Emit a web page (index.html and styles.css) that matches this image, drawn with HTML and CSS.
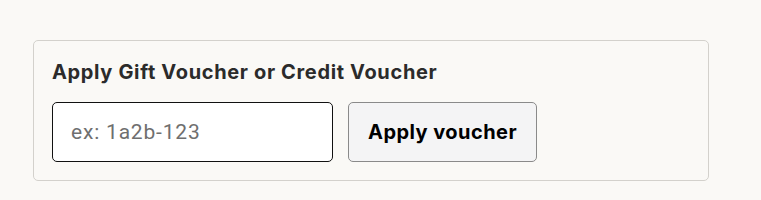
FILE: index.html
```html
<!DOCTYPE html>
<html lang="en">
<head>
    <meta charset="UTF-8">
    <title>Apply voucher</title>
    <link rel="stylesheet" href="styles.css">
</head>
<body>
    <div class="voucher-box">
        <h3 class="voucher-title">Apply Gift Voucher or Credit Voucher</h3>
        <form class="voucher-form" onsubmit="return false">
            <input class="voucher-input" type="text" placeholder="ex: 1a2b-123">
            <button class="voucher-button" type="submit">Apply voucher</button>
        </form>
    </div>
</body>
</html>
```

FILE: styles.css
```css
body {
    margin: 0;
    padding: 40px 0 0 33px;
    background-color: #faf9f6;
    font-family: Inter, "Liberation Sans", sans-serif;
    color: #2b2b2b;
}

.voucher-box {
    width: 638px;
    border: 1px solid #d3d1cc;
    border-radius: 5px;
    padding: 18px;
}

.voucher-title {
    margin: 0 0 17px 0;
    font-size: 20px;
    font-weight: 700;
    letter-spacing: 0.65px;
    line-height: 26px;
    color: #2b2b2b;
}

.voucher-form {
    display: flex;
    gap: 15px;
}

.voucher-input {
    width: 281px;
    height: 60px;
    box-sizing: border-box;
    border: 1px solid #111;
    border-radius: 5px;
    padding: 0 18px;
    font-family: Roboto, "Liberation Sans", sans-serif;
    font-size: 21px;
    letter-spacing: 0.8px;
    background: #fff;
}

.voucher-input::placeholder {
    color: #6f6f6f;
}

.voucher-button {
    height: 60px;
    box-sizing: border-box;
    padding: 0 19px;
    border: 1px solid #8a8a8a;
    border-radius: 5px;
    background-color: #f4f4f5;
    font-family: Inter, "Liberation Sans", sans-serif;
    font-size: 20px;
    font-weight: 700;
    letter-spacing: 0.45px;
    color: #000;
}
```
